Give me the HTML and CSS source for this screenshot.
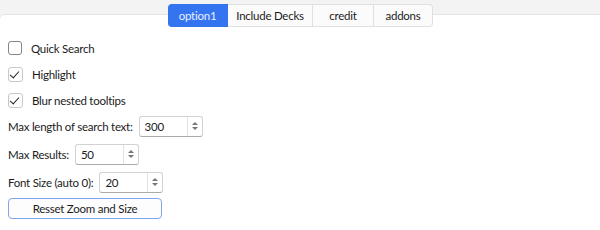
FILE: index.html
```html
<!DOCTYPE html>
<html lang="en">
<head>
    <meta charset="UTF-8">
    <title>Options</title>
    <link rel="stylesheet" href="styles.css">
</head>
<body>
    <div class="tabbar">
        <div class="tab active">option1</div>
        <div class="tab w-decks">Include Decks</div>
        <div class="tab w-credit">credit</div>
        <div class="tab w-addons">addons</div>
    </div>
    <div class="panel">
        <div class="checks">
            <label class="check-row"><span class="box"></span>Quick Search</label>
            <label class="check-row"><span class="box checked"></span>Highlight</label>
            <label class="check-row"><span class="box checked"></span>Blur nested tooltips</label>
        </div>
        <div class="spins">
            <div class="spin-row">
                <span class="label">Max length of search text:</span>
                <div class="spinbox"><span class="value">300</span><span class="arrows"><i class="up"></i><i class="down"></i></span></div>
            </div>
            <div class="spin-row">
                <span class="label">Max Results:</span>
                <div class="spinbox"><span class="value">50</span><span class="arrows"><i class="up"></i><i class="down"></i></span></div>
            </div>
            <div class="spin-row">
                <span class="label">Font Size (auto 0):</span>
                <div class="spinbox"><span class="value">20</span><span class="arrows"><i class="up"></i><i class="down"></i></span></div>
            </div>
        </div>
        <button class="reset">Resset Zoom and Size</button>
    </div>
</body>
</html>
```

FILE: styles.css
```css
body {
    margin: 0;
    height: 100vh;
    overflow: hidden;
    display: flex;
    flex-direction: column;
    background-color: #f3f3f3;
    font-family: Lato, sans-serif;
    font-size: 11.5px;
    letter-spacing: -0.25px;
    color: #1b1b1b;
}

.tabbar {
    display: flex;
    justify-content: center;
    padding-top: 4px;
    padding-left: 1px;
    position: relative;
    z-index: 1;
}

.tab {
    height: 21px;
    line-height: 21px;
    width: 58px;
    text-align: center;
    background-color: #fbfbfb;
    border: 1px solid #e0e0e0;
    border-left: none;
}

.tab.active {
    width: 59px;
    background-color: #3574f0;
    border-color: #3574f0;
    color: #e8efff;
    border-radius: 4px 0 0 4px;
}

.tab.w-decks {
    width: 84px;
}

.tab.w-credit {
    width: 60px;
}

.tab.w-addons {
    width: 58px;
    border-radius: 0 4px 4px 0;
}

.panel {
    flex: 1;
    margin-top: -13px;
    background-color: #fff;
    border-top: 1px solid #e4e4e4;
    border-top-left-radius: 5px;
    padding: 20px 8px 0 8px;
}

.checks {
    display: flex;
    flex-direction: column;
}

.check-row {
    display: flex;
    align-items: center;
    height: 26px;
}

.box {
    width: 12px;
    height: 12px;
    border: 1.5px solid #858585;
    border-radius: 3px;
    margin-right: 9px;
    position: relative;
}

.box.checked {
    border: 1px solid #c8c8c8;
    width: 13px;
    height: 13px;
}

.box.checked::after {
    content: "";
    position: absolute;
    left: 3px;
    top: 1px;
    width: 4px;
    height: 8px;
    border-right: 1.5px solid #222;
    border-bottom: 1.5px solid #222;
    transform: rotate(42deg);
}

.spins {
    display: flex;
    flex-direction: column;
    gap: 8px;
    margin-top: 3px;
}

.spin-row {
    display: flex;
    align-items: center;
    height: 20px;
}

.label {
    margin-right: 6px;
}

.spinbox {
    display: flex;
    width: 62px;
    height: 19px;
    border: 1px solid #d2d2d2;
    border-bottom-color: #aaa;
    border-radius: 3px;
    background-color: #fff;
}

.value {
    flex: 1;
    padding-left: 5px;
    line-height: 19px;
}

.arrows {
    width: 14px;
    border-left: 1px solid #e2e2e2;
    display: flex;
    flex-direction: column;
    align-items: center;
    justify-content: center;
    gap: 2px;
}

.arrows i {
    width: 0;
    height: 0;
    border-left: 3px solid transparent;
    border-right: 3px solid transparent;
}

.arrows .up {
    border-bottom: 3px solid #777;
}

.arrows .down {
    border-top: 3px solid #777;
}

.reset {
    display: block;
    margin-top: 6px;
    width: 154px;
    height: 21px;
    padding: 0;
    background-color: #fdfdfd;
    border: 1px solid #7ea6ee;
    border-radius: 4px;
    font-family: Lato, sans-serif;
    font-size: 11.5px;
    letter-spacing: -0.25px;
    color: #1b1b1b;
}
```
